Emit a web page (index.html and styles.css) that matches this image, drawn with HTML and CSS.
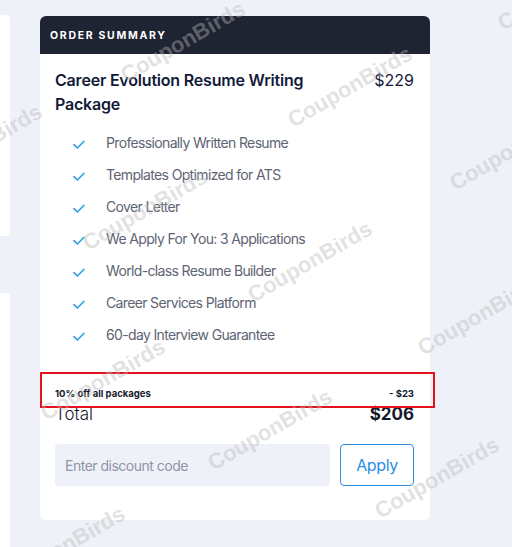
FILE: index.html
```html
<!DOCTYPE html>
<html lang="en">
<head>
<meta charset="utf-8">
<title>Order Summary</title>
<link rel="stylesheet" href="styles.css">
</head>
<body>
<div class="page">
  <aside class="side">
    <div class="side-panel side-top"></div>
    <div class="side-panel side-bottom"></div>
  </aside>
  <section class="card">
    <header class="card-head">ORDER SUMMARY</header>
    <div class="card-body">
      <div class="product">
        <h2 class="product-name">Career Evolution Resume Writing Package</h2>
        <span class="product-price">$229</span>
      </div>
      <ul class="features">
        <li><svg class="check" viewBox="0 0 12 9" width="12" height="9"><path d="M1 4.6 L4.4 8 L11 1.2"/></svg>Professionally Written Resume</li>
        <li><svg class="check" viewBox="0 0 12 9" width="12" height="9"><path d="M1 4.6 L4.4 8 L11 1.2"/></svg>Templates Optimized for ATS</li>
        <li><svg class="check" viewBox="0 0 12 9" width="12" height="9"><path d="M1 4.6 L4.4 8 L11 1.2"/></svg>Cover Letter</li>
        <li><svg class="check" viewBox="0 0 12 9" width="12" height="9"><path d="M1 4.6 L4.4 8 L11 1.2"/></svg>We Apply For You: 3 Applications</li>
        <li><svg class="check" viewBox="0 0 12 9" width="12" height="9"><path d="M1 4.6 L4.4 8 L11 1.2"/></svg>World-class Resume Builder</li>
        <li><svg class="check" viewBox="0 0 12 9" width="12" height="9"><path d="M1 4.6 L4.4 8 L11 1.2"/></svg>Career Services Platform</li>
        <li><svg class="check" viewBox="0 0 12 9" width="12" height="9"><path d="M1 4.6 L4.4 8 L11 1.2"/></svg>60-day Interview Guarantee</li>
      </ul>
      <div class="discount">
        <span>10% off all packages</span>
        <span>- $23</span>
      </div>
      <div class="total">
        <span class="total-label">Total</span>
        <span class="total-amount">$206</span>
      </div>
      <form class="code-form" onsubmit="return false">
        <input class="code-input" type="text" placeholder="Enter discount code">
        <button class="code-apply" type="button">Apply</button>
      </form>
    </div>
  </section>
  <div class="highlight"></div>
  <div class="wm wm1">CouponBirds</div>
  <div class="wm wm2">CouponBirds</div>
  <div class="wm wm3">CouponBirds</div>
  <div class="wm wm4">CouponBirds</div>
  <div class="wm wm5">CouponBirds</div>
  <div class="wm wm6">CouponBirds</div>
  <div class="wm wm7">CouponBirds</div>
  <div class="wm wm8">CouponBirds</div>
  <div class="wm wm9">CouponBirds</div>
  <div class="wm wm10">CouponBirds</div>
  <div class="wm wm11">CouponBirds</div>
  <div class="wm wm12">CouponBirds</div>
</div>
</body>
</html>
```

FILE: styles.css
```css
* { box-sizing: border-box; }
html, body { margin: 0; padding: 0; }
body {
  background: #eef1f8;
  font-family: Inter, "Noto Sans", sans-serif;
  width: 512px;
  height: 547px;
  overflow: hidden;
}
.page {
  position: relative;
  display: flex;
  align-items: flex-start;
  gap: 30px;
  padding-top: 15px;
  height: 547px;
  overflow: hidden;
}
.side {
  width: 10px;
  flex-shrink: 0;
  display: flex;
  flex-direction: column;
  gap: 57px;
}
.side-panel {
  flex-shrink: 0;
  background: #fff;
  border-radius: 0 4px 4px 0;
}
.side-top { height: 221px; }
.side-bottom { height: 260px; }

.card {
  width: 390px;
  height: 504px;
  flex-shrink: 0;
  margin-top: 1px;
  background: #fff;
  border-radius: 6px;
  overflow: hidden;
}
.card-head {
  height: 38px;
  background: #1f2432;
  color: #fff;
  font-size: 10.5px;
  font-weight: 700;
  letter-spacing: 1.7px;
  padding-left: 10px;
  display: flex;
  align-items: center;
}
.card-body {
  padding: 14px 16px 0 15px;
}
.product {
  display: flex;
  justify-content: space-between;
  align-items: flex-start;
}
.product-name {
  margin: 0;
  width: 270px;
  font-size: 16px;
  line-height: 24px;
  font-weight: 600;
  color: #131a38;
  letter-spacing: -0.2px;
}
.product-price {
  font-size: 16px;
  line-height: 24px;
  color: #131a38;
  font-weight: 400;
}
.features {
  list-style: none;
  margin: 10px 0 0;
  padding: 0;
}
.features li {
  height: 32px;
  display: flex;
  align-items: center;
  padding-left: 18px;
  font-size: 14px;
  color: #5d6472;
  letter-spacing: -0.65px;
}
.check {
  margin-right: 21px;
  margin-top: 5px;
  fill: none;
  stroke: #2a9be2;
  stroke-width: 1.5;
  stroke-linecap: round;
  stroke-linejoin: round;
}
.discount {
  margin-top: 33px;
  height: 20px;
  display: flex;
  justify-content: space-between;
  align-items: center;
  font-size: 9.5px;
  font-weight: 700;
  color: #151a2c;
}
.total {
  height: 22px;
  display: flex;
  justify-content: space-between;
  align-items: center;
  font-size: 17px;
  color: #151a2c;
}
.total-label { font-weight: 300; }
.total-amount { font-weight: 700; }
.code-form {
  margin: 19px 0 0;
  display: flex;
  gap: 10px;
}
.code-input {
  flex: 1;
  height: 42px;
  border: none;
  border-radius: 4px;
  background: #eef1f8;
  padding: 0 10px;
  font-family: Inter, "Noto Sans", sans-serif;
  font-size: 14px;
  color: #333;
  outline: none;
}
.code-input::placeholder { color: #8f95a7; letter-spacing: -0.5px; }
.code-apply {
  width: 74px;
  height: 42px;
  background: #fff;
  border: 1px solid #2b8de6;
  border-radius: 4px;
  color: #2b8de6;
  font-family: Inter, "Noto Sans", sans-serif;
  font-size: 16px;
  letter-spacing: -0.4px;
  padding: 0;
}
.highlight {
  position: absolute;
  left: 40px;
  top: 372px;
  width: 395px;
  height: 36px;
  border: 2px solid #e3121d;
  pointer-events: none;
}
.wm {
  position: absolute;
  font-family: "Liberation Sans", Arial, sans-serif;
  font-weight: 700;
  font-size: 22px;
  color: rgba(185, 185, 185, 0.42);
  transform: translate(-50%, -50%) rotate(-30deg);
  white-space: nowrap;
  pointer-events: none;
}
.wm1 { left: 183px; top: 42px; }
.wm2 { left: 350px; top: 87px; }
.wm3 { left: -20px; top: 145px; }
.wm4 { left: 560px; top: -10px; }
.wm5 { left: 145px; top: 210px; }
.wm6 { left: 310px; top: 262px; }
.wm7 { left: 512px; top: 150px; }
.wm8 { left: 103px; top: 380px; }
.wm9 { left: 270px; top: 430px; }
.wm10 { left: 437px; top: 478px; }
.wm11 { left: 63px; top: 547px; }
.wm12 { left: 480px; top: 315px; }
```
